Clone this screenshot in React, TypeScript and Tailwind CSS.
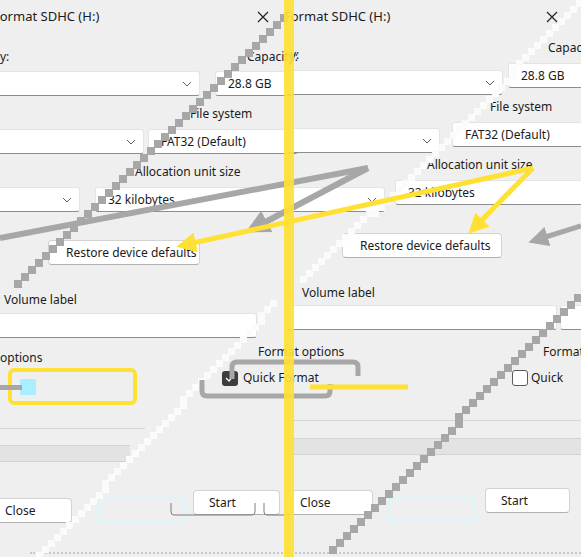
import type { ReactNode } from "react";

const font = { fontFamily: '"Noto Sans", "Open Sans", sans-serif' };

function Chevron() {
  return (
    <svg width="10" height="6" viewBox="0 0 10 6" className="shrink-0">
      <path d="M1 1l4 4 4-4" fill="none" stroke="#5f5f5f" strokeWidth="1" />
    </svg>
  );
}

function CloseX() {
  return (
    <svg width="12" height="12" viewBox="0 0 12 12" className="shrink-0">
      <path d="M1 1l10 10M11 1L1 11" stroke="#222" strokeWidth="1.2" />
    </svg>
  );
}

// white combo / text box with the dark bottom edge
function Field({ className = "", children, chevron = false }: { className?: string; children?: ReactNode; chevron?: boolean }) {
  return (
    <div
      className={`flex h-[25px] shrink-0 items-center rounded-[3px] border border-[#e4e4e4] border-b-[#8d8d8d] bg-white text-[12px] text-[#1b1b1b] ${
        chevron ? "justify-end pr-[7px]" : "pl-[12px]"
      } ${className}`}
    >
      {chevron ? <Chevron /> : children}
    </div>
  );
}

function Btn({ className = "", children }: { className?: string; children?: ReactNode }) {
  return (
    <div
      className={`flex h-[25px] shrink-0 items-center rounded-[4px] border border-[#d3d3d3] border-b-[#b0b0b0] bg-white text-[12px] text-[#1b1b1b] ${className}`}
    >
      {children}
    </div>
  );
}

// pixel staircase, like a badly scaled line
function stairs(x1: number, y1: number, x2: number, y2: number, s: number) {
  const n = Math.ceil(Math.max(Math.abs(x2 - x1), Math.abs(y2 - y1)) / s);
  const pts: [number, number][] = [];
  for (let i = 0; i <= n; i++) {
    const t = i / n;
    pts.push([Math.round((x1 + (x2 - x1) * t) / s) * s, Math.round((y1 + (y2 - y1) * t) / s) * s]);
  }
  return pts;
}

function Stairs({ x1, y1, x2, y2, s, fill }: { x1: number; y1: number; x2: number; y2: number; s: number; fill: string }) {
  return (
    <g fill={fill}>
      {stairs(x1, y1, x2, y2, s).map(([x, y], i) => (
        <rect key={i} x={x} y={y} width={s + 1} height={s + 1} />
      ))}
    </g>
  );
}

function Overlay() {
  const yellow = "#ffe135";
  const gray = "#a7a7a7";
  return (
    <svg className="pointer-events-none absolute inset-0" width="581" height="557" viewBox="0 0 581 557">
      <defs>
        <marker id="ya" viewBox="0 0 10 10" refX="6" refY="5" markerWidth="4" markerHeight="4" orient="auto-start-reverse">
          <path d="M0 0L10 5L0 10z" fill={yellow} />
        </marker>
        <marker id="ga" viewBox="0 0 10 10" refX="6" refY="5" markerWidth="4" markerHeight="4" orient="auto-start-reverse">
          <path d="M0 0L10 5L0 10z" fill={gray} />
        </marker>
      </defs>

      <Stairs x1={300} y1={278} x2={578} y2={0} s={6} fill="#fbfbfb" />
      <Stairs x1={38} y1={552} x2={272} y2={300} s={6} fill="#fbfbfb" />
      <Stairs x1={14} y1={278} x2={280} y2={12} s={7} fill={gray} />
      <Stairs x1={329} y1={546} x2={581} y2={290} s={7} fill={gray} />

      {/* ghost outline of a start button */}
      <path d="M171 503V512Q171 515 174 515H252Q255 515 255 512V503" fill="none" stroke="#7c7c7c" strokeWidth="1" />
      <path d="M264 503V512Q264 515 267 515H290" fill="none" stroke="#7c7c7c" strokeWidth="1" />

      {/* focus ring leftovers round Quick Format */}
      <path d="M232 379V367Q232 362 237 362H353Q358 362 358 367V376" fill="none" stroke={gray} strokeWidth="5" />
      <path d="M202 380V391Q202 396 207 396H325Q330 396 330 391V384" fill="none" stroke={gray} strokeWidth="5" />
      <rect x="0" y="385" width="22" height="5" fill={gray} />

      {/* gray pointers */}
      <polyline points="0,238 368,168" fill="none" stroke={gray} strokeWidth="6" />
      <line x1="368" y1="168" x2="254" y2="228" stroke={gray} strokeWidth="6" markerEnd="url(#ga)" />
      <line x1="581" y1="226" x2="536" y2="240" stroke={gray} strokeWidth="5" markerEnd="url(#ga)" />

      {/* yellow pointers */}
      <line x1="533" y1="168" x2="184" y2="245" stroke={yellow} strokeWidth="5" markerEnd="url(#ya)" />
      <line x1="533" y1="168" x2="474" y2="228" stroke={yellow} strokeWidth="5" markerEnd="url(#ya)" />
      <line x1="310" y1="387" x2="408" y2="387" stroke={yellow} strokeWidth="5" />

      <rect x="284" y="0" width="10" height="557" fill={yellow} opacity="0.92" />
    </svg>
  );
}

function LeftDialog() {
  return (
    <div className="flex w-[290px] shrink-0 flex-col">
      <div className="flex h-[34px] items-center justify-between pr-[21px]">
        <span className="-ml-[7px] text-[13px] text-[#1b1b1b]">Format SDHC (H:)</span>
        <CloseX />
      </div>

      <div className="mt-[16px] flex h-[14px] items-center text-[12px] text-[#1b1b1b]">
        <span className="w-[247px] shrink-0">y:</span>
        <span>Capacity:</span>
      </div>
      <div className="mt-[7px] flex">
        <Field chevron className="-ml-[4px] w-[204px]" />
        <Field className="ml-[15px] w-[80px]">28.8 GB</Field>
      </div>

      <div className="ml-[190px] mt-[11px] h-[14px] text-[12px] leading-[14px] text-[#1b1b1b]">File system</div>
      <div className="mt-[8px] flex">
        <Field chevron className="-ml-[4px] w-[148px]" />
        <Field className="ml-[4px] w-[150px]">FAT32 (Default)</Field>
      </div>

      <div className="ml-[135px] mt-[11px] h-[14px] text-[12px] leading-[14px] text-[#1b1b1b]">Allocation unit size</div>
      <div className="mt-[8px] flex">
        <Field chevron className="-ml-[4px] w-[84px]" />
        <Field className="ml-[15px] w-[200px]">32 kilobytes</Field>
      </div>

      <Btn className="ml-[48px] mt-[28px] w-[152px] pl-[17px]">Restore device defaults</Btn>

      <div className="ml-[4px] mt-[28px] h-[14px] text-[12px] leading-[14px] text-[#1b1b1b]">Volume label</div>
      <Field className="-ml-[4px] mt-[6px] w-[261px]" />

      <div className="mt-[13px] h-[14px] text-[12px] leading-[14px] text-[#1b1b1b]">options</div>
      <div className="ml-[8px] mt-[3px] flex h-[37px] w-[129px] items-center rounded-[6px] border-4 border-[#ffe135] pl-[8px]">
        <div className="h-[16px] w-[16px] rounded-[2px] bg-[#a8f0ff]" />
      </div>

      <div className="mt-[23px] h-px w-[145px] bg-[#d6d6d6]" />
      <div className="mt-[16px] h-[17px] w-[130px] border-y border-[#d2d2d2] bg-[#e3e3e3]" />

      <div className="mt-[28px] flex items-start">
        <Btn className="-ml-[4px] mt-[8px] w-[76px] pl-[8px]">Close</Btn>
        <div className="ml-[25px] mt-[8px] h-[25px] w-[88px] shrink-0 rounded-[4px] border-2 border-[#d9f6ff]" />
        <Btn className="ml-[8px] w-[87px] pl-[15px]">Start</Btn>
      </div>

      <div className="ml-[30px] mt-[29px] border-t-2 border-dotted border-[#c9c9c9]" />
    </div>
  );
}

function RightDialog() {
  return (
    <div className="flex w-[291px] shrink-0 flex-col">
      <div className="flex h-[34px] items-center justify-between pr-[23px]">
        <span className="-ml-[6px] text-[13px] text-[#1b1b1b]">Format SDHC (H:)</span>
        <CloseX />
      </div>

      <div className="mt-[7px] flex h-[21px] items-start text-[12px] leading-[14px] text-[#1b1b1b]">
        <span className="mt-[7px] w-[258px] shrink-0">y:</span>
        <span>Capacity:</span>
      </div>
      <div className="mt-px flex items-start">
        <Field chevron className="-ml-[4px] mt-[7px] w-[217px]" />
        <Field className="ml-[5px] w-[80px]">28.8 GB</Field>
      </div>

      <div className="ml-[200px] mt-[5px] h-[14px] text-[12px] leading-[14px] text-[#1b1b1b]">File system</div>
      <div className="mt-[8px] flex items-start">
        <Field chevron className="-ml-[4px] mt-[6px] w-[154px]" />
        <Field className="ml-[12px] w-[140px]">FAT32 (Default)</Field>
      </div>

      <div className="ml-[137px] mt-[5px] h-[14px] text-[12px] leading-[14px] text-[#1b1b1b]">Allocation unit size</div>
      <div className="mt-[8px] flex items-start">
        <Field chevron className="-ml-[4px] mt-[7px] w-[99px]" />
        <Field className="ml-[10px] w-[200px]">32 kilobytes</Field>
      </div>

      <Btn className="ml-[52px] mt-[21px] w-[160px] pl-[17px]">Restore device defaults</Btn>

      <div className="ml-[12px] mt-[28px] h-[14px] text-[12px] leading-[14px] text-[#1b1b1b]">Volume label</div>
      <div className="mt-[5px] flex">
        <Field className="-ml-[4px] w-[271px]" />
        <Field className="ml-[3px] w-[30px]" />
      </div>

      <div className="mt-[15px] flex h-[14px] text-[12px] leading-[14px] text-[#1b1b1b]">
        <span className="-ml-[32px] w-[285px] shrink-0">Format options</span>
        <span>Format</span>
      </div>
      <div className="mt-[11px] flex h-[16px] items-center text-[12px] text-[#1b1b1b]">
        <div className="-ml-[68px] flex w-[290px] shrink-0 items-center">
          <div className="flex h-[15px] w-[16px] items-center justify-center rounded-[3px] bg-[#3d3d3d]">
            <svg width="10" height="8" viewBox="0 0 10 8">
              <path d="M1 4l3 3 5-6" fill="none" stroke="#fff" strokeWidth="1.3" />
            </svg>
          </div>
          <span className="ml-[5px]">Quick Format</span>
        </div>
        <div className="h-[16px] w-[16px] shrink-0 rounded-[3px] border border-[#5c5c5c] bg-white" />
        <span className="ml-[3px]">Quick</span>
      </div>

      <div className="mt-[34px] h-px bg-[#d6d6d6]" />
      <div className="mt-[17px] h-[17px] border-y border-[#d2d2d2] bg-[#e3e3e3]" />

      <div className="mt-[33px] flex items-start">
        <Btn className="-ml-[4px] mt-[2px] w-[87px] pl-[13px]">Close</Btn>
        <div className="ml-[14px] mt-[9px] h-[25px] w-[88px] shrink-0 rounded-[4px] border-2 border-[#d9f6ff]" />
        <Btn className="ml-[10px] w-[85px] pl-[15px]">Start</Btn>
      </div>

      <div className="mt-[30px] border-t-2 border-dotted border-[#c9c9c9]" />
    </div>
  );
}

export default function App() {
  return (
    <div className="relative flex h-[557px] w-[581px] overflow-hidden bg-[#efefef]" style={font}>
      <LeftDialog />
      <RightDialog />
      <Overlay />
    </div>
  );
}
